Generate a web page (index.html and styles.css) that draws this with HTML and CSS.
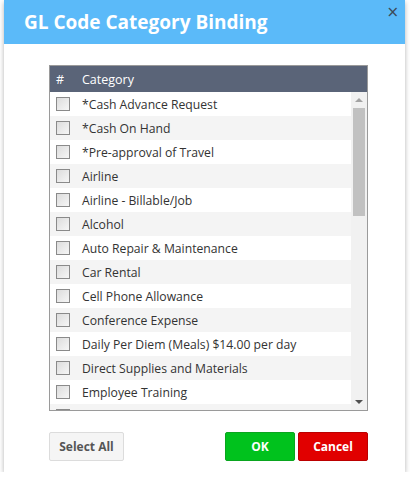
FILE: index.html
```html
<!DOCTYPE html>
<html lang="en">
<head>
  <meta charset="UTF-8" />
  <title>GL Code Category Binding</title>
  <link rel="stylesheet" href="styles.css">
</head>
<body>

  <div class="dialog">
    <!-- Header -->
    <div class="dialog-header">
      <h2>GL Code Category Binding</h2>
      <span class="close-btn">&times;</span>
    </div>

    <!-- Body -->
    <div class="dialog-body">
      <div class="category-table">
        <div class="table-head">
          <span class="col-num">#</span>
          <span class="col-name">Category</span>
        </div>

        <div class="table-scroll">
          <div class="table-rows">
            <div class="row"><span class="check"></span><span>*Cash Advance Request</span></div>
            <div class="row"><span class="check"></span><span>*Cash On Hand</span></div>
            <div class="row"><span class="check"></span><span>*Pre-approval of Travel</span></div>
            <div class="row"><span class="check"></span><span>Airline</span></div>
            <div class="row"><span class="check"></span><span>Airline - Billable/Job</span></div>
            <div class="row"><span class="check"></span><span>Alcohol</span></div>
            <div class="row"><span class="check"></span><span>Auto Repair &amp; Maintenance</span></div>
            <div class="row"><span class="check"></span><span>Car Rental</span></div>
            <div class="row"><span class="check"></span><span>Cell Phone Allowance</span></div>
            <div class="row"><span class="check"></span><span>Conference Expense</span></div>
            <div class="row"><span class="check"></span><span>Daily Per Diem (Meals) $14.00 per day</span></div>
            <div class="row"><span class="check"></span><span>Direct Supplies and Materials</span></div>
            <div class="row"><span class="check"></span><span>Employee Training</span></div>
            <!-- next row, scrolled out of view -->
            <div class="row"><span class="check"></span></div>
          </div>

          <!-- Fake scrollbar -->
          <div class="scrollbar">
            <span class="arrow arrow-up"></span>
            <div class="track">
              <div class="thumb"></div>
            </div>
            <span class="arrow arrow-down"></span>
          </div>
        </div>
      </div>
    </div>

    <!-- Footer -->
    <div class="dialog-footer">
      <button class="btn btn-select">Select All</button>
      <div class="footer-actions">
        <button class="btn btn-ok">OK</button>
        <button class="btn btn-cancel">Cancel</button>
      </div>
    </div>
  </div>

</body>
</html>
```

FILE: styles.css
```css
/* Page */
body {
  margin: 0;
  padding: 0;
  background: #fff;
  font-family: 'Open Sans', 'Liberation Sans', sans-serif;
  color: #333;
}

/* Dialog card */
.dialog {
  width: 401px;
  height: 472px;
  margin-left: 4px;
  background: #fff;
  box-shadow: 0 2px 5px rgba(0, 0, 0, 0.3);
  display: flex;
  flex-direction: column;
}

/* Header */
.dialog-header {
  position: relative;
  height: 44px;
  background: #5bbaf9;
  padding-left: 20px;
  display: flex;
  align-items: center;
}

.dialog-header h2 {
  margin: 0;
  font-size: 19px;
  font-weight: 700;
  color: #fff;
}

.close-btn {
  position: absolute;
  top: 3px;
  right: 6px;
  font-family: 'DejaVu Sans', sans-serif;
  font-size: 15px;
  color: #3c4a5a;
}

/* Body */
.dialog-body {
  padding: 21px 37px 0 45px;
}

.category-table {
  border: 1px solid #9a9a9a;
}

.table-head {
  height: 26px;
  background: #5a6478;
  color: #fff;
  font-size: 12.5px;
  display: flex;
  align-items: center;
}

.col-num {
  width: 32px;
  padding-left: 6px;
  box-sizing: border-box;
}

/* Rows + scrollbar */
.table-scroll {
  display: flex;
  height: 318px;
  overflow: hidden;
}

.table-rows {
  flex: 1;
}

.row {
  height: 24px;
  display: flex;
  align-items: center;
  font-size: 12.2px;
  color: #333;
}

.row:nth-child(even) {
  background: #f4f4f4;
}

.check {
  width: 12px;
  height: 12px;
  margin: 0 12px 0 6px;
  border: 1px solid #8a8a8a;
  background: linear-gradient(135deg, #dcdcdc 0%, #f6f6f6 100%);
  flex-shrink: 0;
}

.scrollbar {
  width: 16px;
  background: #f1f1f1;
  display: flex;
  flex-direction: column;
  align-items: center;
}

.arrow {
  width: 0;
  height: 0;
  border-left: 4px solid transparent;
  border-right: 4px solid transparent;
  margin: 6px 0;
}

.arrow-up {
  border-bottom: 4px solid #a3a3a3;
}

.arrow-down {
  border-top: 4px solid #505050;
}

.track {
  flex: 1;
  width: 100%;
  padding: 0 2px;
  box-sizing: border-box;
}

.thumb {
  height: 108px;
  background: #c1c1c1;
}

/* Footer */
.dialog-footer {
  display: flex;
  justify-content: space-between;
  padding: 21px 37px 0 45px;
}

.footer-actions {
  display: flex;
  gap: 3px;
}

.btn {
  height: 29px;
  border-radius: 2px;
  font-family: 'Open Sans', 'Liberation Sans', sans-serif;
  font-size: 12px;
  font-weight: 700;
  cursor: pointer;
}

.btn-select {
  width: 75px;
  background: #f5f5f5;
  border: 1px solid #dcdcdc;
  color: #555;
}

.btn-ok {
  width: 70px;
  background: #00c21d;
  border: 1px solid #0aa51f;
  color: #fff;
}

.btn-cancel {
  width: 70px;
  background: #e10000;
  border: 1px solid #bb0000;
  color: #fff;
}
```
